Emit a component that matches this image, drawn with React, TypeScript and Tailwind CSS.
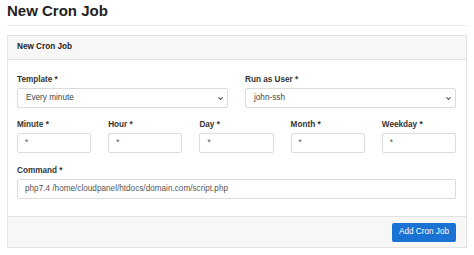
import { ChevronDown } from 'lucide-react'

function Label({ children }: { children: string }) {
  return (
    <label className="block h-[10px] mb-[3px] text-[8.2px] leading-[10px] font-bold text-[#333]">
      {children}
    </label>
  )
}

function Select({ value }: { value: string }) {
  return (
    <div className="flex h-[20px] items-center justify-between rounded-[2px] border border-[#dcdcdc] bg-white pl-[8px] pr-[3px] text-[8.2px] text-[#444]">
      <span>{value}</span>
      <ChevronDown size={7} strokeWidth={3.5} className="text-[#555]" />
    </div>
  )
}

function Input({ value }: { value: string }) {
  return (
    <div className="flex h-[20px] items-center rounded-[2px] border border-[#dcdcdc] bg-white px-[7px] text-[8.2px] text-[#555]">
      {value}
    </div>
  )
}

export default function App() {
  const fields = ['Minute *', 'Hour *', 'Day *', 'Month *', 'Weekday *']

  return (
    <div className="min-h-screen bg-white px-[7px] font-['Liberation_Sans',Arial,sans-serif]">
      <h1 className="h-[26px] border-b border-[#ebebeb] pt-[1px] text-[15px] leading-[20px] font-bold text-[#222]">
        New Cron Job
      </h1>

      <div className="mt-[9px] border border-[#e3e3e3]">
        <div className="flex h-[24px] items-center border-b border-[#e3e3e3] bg-[#f7f7f7] pl-[9px] text-[8.2px] font-bold text-[#222]">
          New Cron Job
        </div>

        <div className="px-[9px] pt-[15px] pb-[17px] pr-[10px]">
          <div className="grid grid-cols-2 gap-[17px]">
            <div>
              <Label>Template *</Label>
              <Select value="Every minute" />
            </div>
            <div>
              <Label>Run as User *</Label>
              <Select value="john-ssh" />
            </div>
          </div>

          <div className="mt-[12px] grid grid-cols-5 gap-[17px]">
            {fields.map((f) => (
              <div key={f}>
                <Label>{f}</Label>
                <Input value="*" />
              </div>
            ))}
          </div>

          <div className="mt-[13px]">
            <Label>Command *</Label>
            <Input value="php7.4 /home/cloudpanel/htdocs/domain.com/script.php" />
          </div>
        </div>

        <div className="flex h-[31px] items-center justify-end border-t border-[#e3e3e3] bg-[#f7f7f7] pr-[10px]">
          <button className="h-[19px] rounded-[2px] bg-[#1a72d2] px-[7px] text-[8.2px] text-white">
            Add Cron Job
          </button>
        </div>
      </div>
    </div>
  )
}
